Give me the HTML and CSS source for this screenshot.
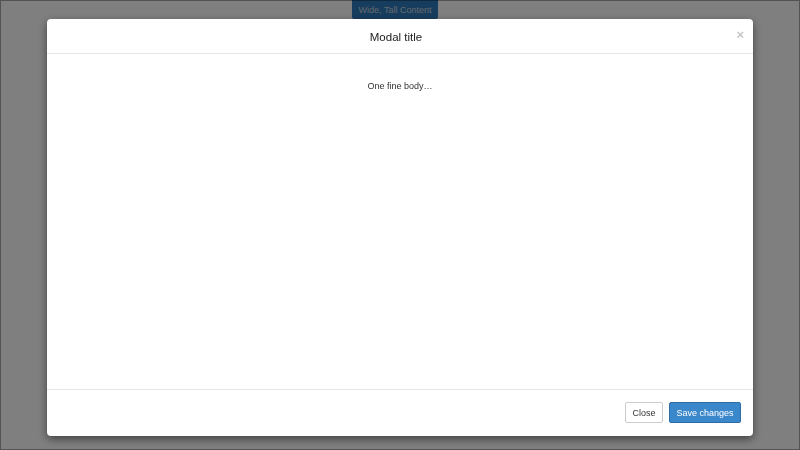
FILE: index.html
```html
<!DOCTYPE html>
<html>
<head>
<meta charset="utf-8">
<link rel="stylesheet" href="styles.css">
</head>
<body>
<div class="page">
  <button class="btn-bg">Wide, Tall Content</button>
</div>
<div class="backdrop"></div>
<div class="modal-wrap">
  <div class="modal">
    <div class="modal-header">
      <h4 class="modal-title">Modal title</h4>
      <span class="close">×</span>
    </div>
    <div class="modal-body">
      <p>One fine body…</p>
    </div>
    <div class="modal-footer">
      <button class="btn btn-default">Close</button>
      <button class="btn btn-primary">Save changes</button>
    </div>
  </div>
</div>
</body>
</html>
```

FILE: styles.css
```css
html, body {
  margin: 0;
  padding: 0;
  width: 800px;
  height: 450px;
  overflow: hidden;
  font-family: "Liberation Sans", Arial, sans-serif;
  background: #fff;
}
.page {
  display: flex;
  justify-content: center;
  padding-right: 10px;
}
.btn-bg {
  width: 86px;
  height: 19px;
  margin: 0;
  padding: 0;
  border: 0;
  background: #2f7bbd;
  color: #c8d2dc;
  font-family: "Liberation Sans", Arial, sans-serif;
  font-size: 9px;
  border-radius: 0 0 2px 2px;
}
.backdrop {
  position: fixed;
  inset: 0;
  background: rgba(0,0,0,0.5);
  box-shadow: inset 0 0 0 1px rgba(0,0,0,0.35);
}
.modal-wrap {
  position: fixed;
  inset: 0;
  display: flex;
  justify-content: center;
  padding-top: 19px;
}
.modal {
  width: 706px;
  height: 417px;
  background: #fff;
  border-radius: 4px;
  box-shadow: 0 3px 8px rgba(0,0,0,0.5);
  display: flex;
  flex-direction: column;
}
.modal-header {
  height: 35px;
  box-sizing: border-box;
  border-bottom: 1px solid #e5e5e5;
  display: flex;
  align-items: center;
  justify-content: center;
  padding-top: 2px;
  padding-right: 8px;
  position: relative;
}
.modal-title {
  margin: 0;
  font-size: 11.5px;
  font-weight: normal;
  color: #222;
}
.close {
  position: absolute;
  right: 9px;
  top: 8px;
  font-size: 13px;
  font-weight: bold;
  color: #c4c4c4;
}
.modal-body {
  flex: 1;
  text-align: center;
  color: #333;
  font-size: 9px;
}
.modal-body p {
  margin: 27px 0 0;
}
.modal-footer {
  height: 47px;
  box-sizing: border-box;
  border-top: 1px solid #e5e5e5;
  display: flex;
  justify-content: flex-end;
  align-items: center;
  gap: 6px;
  padding: 0 12px 1px 0;
}
.btn {
  height: 21px;
  padding: 0;
  font-family: "Liberation Sans", Arial, sans-serif;
  font-size: 9px;
  border-radius: 2px;
  box-sizing: border-box;
}
.btn-default {
  width: 38px;
  background: #fff;
  color: #333;
  border: 1px solid #ccc;
}
.btn-primary {
  width: 72px;
  background: #3a87cb;
  color: #fff;
  border: 1px solid #2e6da4;
}
```
